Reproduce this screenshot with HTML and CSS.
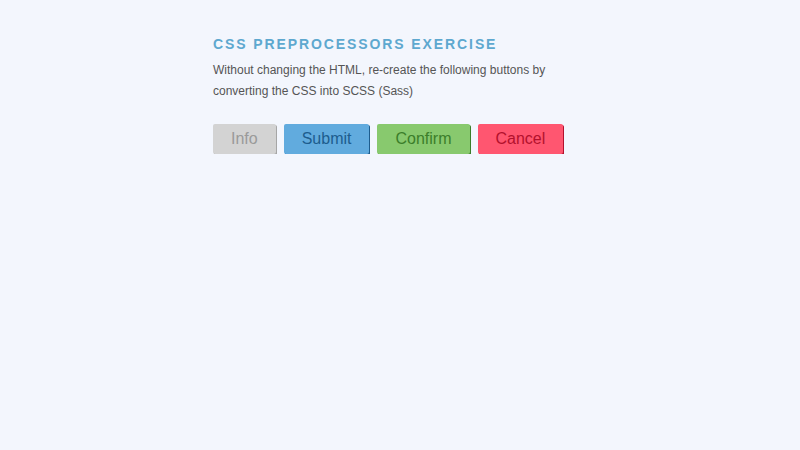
FILE: index.html
```html
<!DOCTYPE html>
<html lang="en">
<head>
    <meta charset="UTF-8">
    <meta name="viewport" content="width=device-width, initial-scale=1.0">
    <title>CSS Preprocessors Exercise</title>
    <link rel="stylesheet" href="styles.css">
</head>
<body>
    <div class="container">
        <h1>CSS Preprocessors Exercise</h1>
        <p>Without changing the HTML, re-create the following buttons by converting the CSS into SCSS (Sass)</p>

        <div class="buttons">
            <button class="btn info">Info</button>
            <button class="btn submit">Submit</button>
            <button class="btn confirm">Confirm</button>
            <button class="btn cancel">Cancel</button>
        </div>
    </div>
</body>
</html>
```

FILE: styles.css
```css
body {
    font-family: 'Liberation Sans', Arial, sans-serif;
    background-color: #f3f6fd;
    margin: 0;
    color: #555;
}

.container {
    width: 374px;
    margin: 0 auto;
    padding-top: 36px;
}

h1 {
    color: #5ea8cf;
    font-size: 14px;
    line-height: 16px;
    text-transform: uppercase;
    letter-spacing: 1.9px;
    margin: 0 0 8px;
}

p {
    font-size: 12px;
    line-height: 21px;
    margin: 0 0 22px;
}

.buttons {
    display: flex;
    gap: 8px;
}

.btn {
    font-family: inherit;
    font-size: 16px;
    height: 30px;
    padding: 0 18px;
    border: none;
    border-radius: 2px;
    cursor: pointer;
}

.info {
    background-color: #d3d3d3;
    color: #9a9a9a;
    box-shadow: 1px 1px 0 #a6a6a6, 1px 2px 0 #a6a6a6;
}

.submit {
    background-color: #61abde;
    color: #1d5d8e;
    box-shadow: 1px 1px 0 #1d5d8e, 1px 2px 0 #1d5d8e;
}

.confirm {
    background-color: #88c96e;
    color: #3b7e2a;
    box-shadow: 1px 1px 0 #3b7e2a, 1px 2px 0 #3b7e2a;
}

.cancel {
    background-color: #ff5670;
    color: #b3112d;
    box-shadow: 1px 1px 0 #b3112d, 1px 2px 0 #b3112d;
}
```
